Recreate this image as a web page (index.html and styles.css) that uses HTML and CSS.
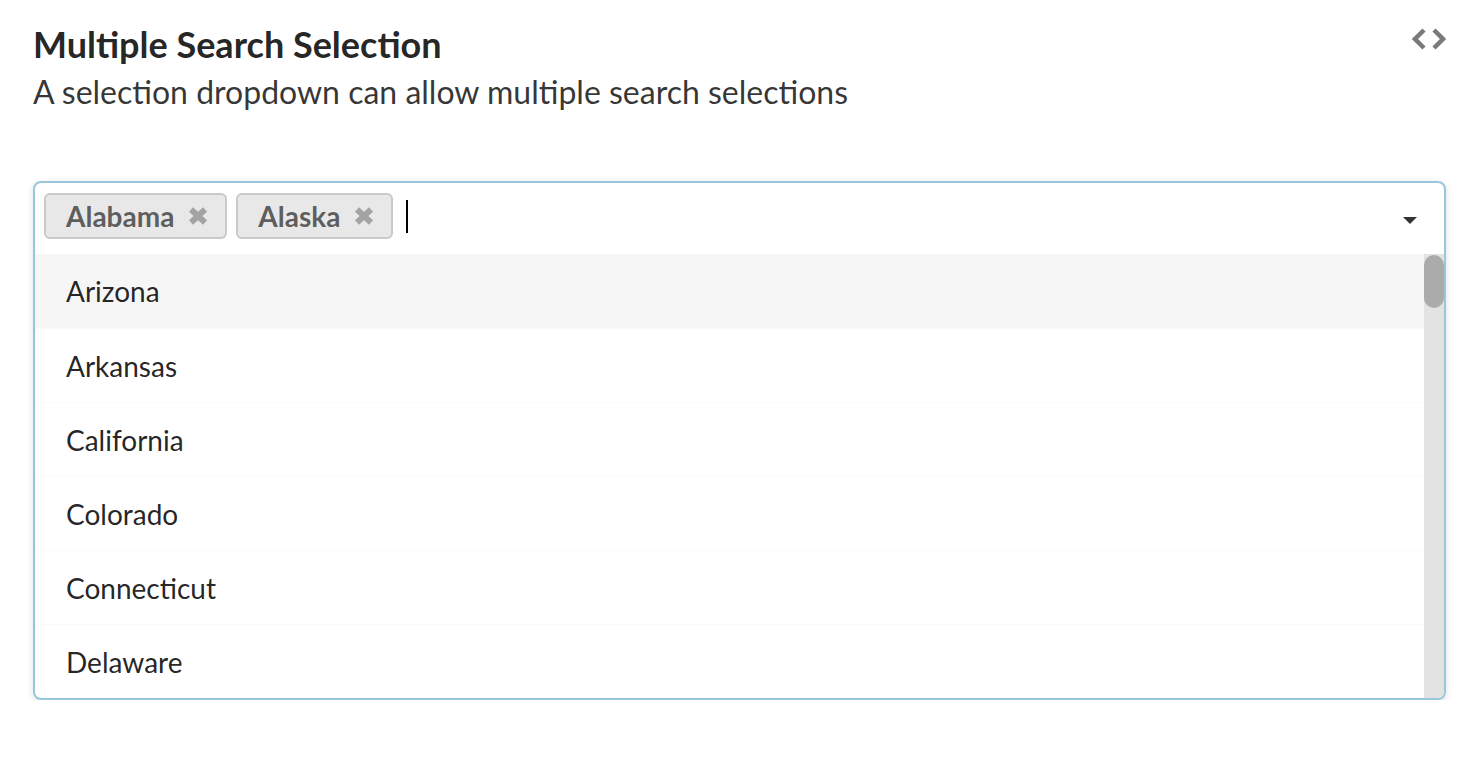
FILE: index.html
```html
<!DOCTYPE html>
<html lang="en">
<head>
  <meta charset="UTF-8" />
  <title>Multiple Search Selection</title>
  <link rel="stylesheet" href="styles.css">
</head>
<body>
  <div class="example">
    <div class="example-head">
      <div class="example-title">
        <h4 class="header">Multiple Search Selection</h4>
        <div class="description">A selection dropdown can allow multiple search selections</div>
      </div>
      <svg class="code-icon" width="34" height="24" viewBox="0 0 34 24">
        <polyline points="12,3 3,12 12,21" />
        <polyline points="22,3 31,12 22,21" />
      </svg>
    </div>

    <div class="dropdown">
      <div class="selection">
        <a class="label">Alabama<svg class="delete" width="20" height="18" viewBox="0 0 20 18"><path d="M3 2.5 L17 15.5 M17 2.5 L3 15.5" /></svg></a>
        <a class="label">Alaska<svg class="delete" width="20" height="18" viewBox="0 0 20 18"><path d="M3 2.5 L17 15.5 M17 2.5 L3 15.5" /></svg></a>
        <span class="search"><span class="caret"></span></span>
        <span class="dropdown-icon"></span>
      </div>
      <div class="menu">
        <div class="items">
          <div class="item selected">Arizona</div>
          <div class="item">Arkansas</div>
          <div class="item">California</div>
          <div class="item">Colorado</div>
          <div class="item">Connecticut</div>
          <div class="item">Delaware</div>
        </div>
        <div class="scrollbar">
          <div class="thumb"></div>
        </div>
      </div>
    </div>
  </div>
</body>
</html>
```

FILE: styles.css
```css
* {
  box-sizing: border-box;
  margin: 0;
  padding: 0;
}

body {
  font-family: Lato, "Helvetica Neue", Arial, sans-serif;
  background: #fff;
  color: rgba(0, 0, 0, 0.87);
  padding: 22px 36px 0 33px;
}

.example-head {
  display: flex;
  justify-content: space-between;
  align-items: flex-start;
}

.header {
  font-size: 36px;
  font-weight: 700;
  line-height: 44px;
  color: rgba(0, 0, 0, 0.87);
}

.description {
  margin-top: 4px;
  font-size: 32px;
  line-height: 44px;
  color: rgba(0, 0, 0, 0.8);
}

.code-icon {
  margin-top: 5px;
  fill: none;
  stroke: #7a7a7a;
  stroke-width: 4.5;
}

.dropdown {
  margin-top: 67px;
  border: 2px solid #96c8da;
  border-radius: 8px;
  box-shadow: 0 2px 6px 0 rgba(34, 36, 38, 0.15);
  overflow: hidden;
}

.selection {
  display: flex;
  align-items: flex-start;
  height: 71px;
  padding: 10px 27px 0 9px;
}

.label {
  display: inline-flex;
  align-items: center;
  height: 46px;
  margin-right: 9px;
  padding: 0 19px 0 22px;
  font-size: 28px;
  font-weight: 700;
  color: rgba(0, 0, 0, 0.62);
  background: #e8e8e8;
  border-radius: 6px;
  box-shadow: inset 0 0 0 2px rgba(34, 36, 38, 0.15);
}

.delete {
  margin-left: 14px;
  fill: none;
  stroke: #a3a3a3;
  stroke-width: 6;
}

.search {
  flex: 1;
  display: flex;
  align-items: center;
  height: 46px;
  padding-left: 4px;
}

.caret {
  width: 2px;
  height: 33px;
  background: #000;
}

.dropdown-icon {
  align-self: center;
  margin-bottom: 6px;
  width: 0;
  height: 0;
  border-left: 7px solid transparent;
  border-right: 7px solid transparent;
  border-top: 7px solid rgba(0, 0, 0, 0.8);
}

.menu {
  display: flex;
}

.items {
  flex: 1;
}

.item {
  height: 74px;
  padding: 22px 31px;
  font-size: 28px;
  line-height: 30px;
  color: rgba(0, 0, 0, 0.87);
  border-top: 1px solid #fafafa;
}

.item.selected {
  background: #f6f6f6;
  border-top: none;
}

.scrollbar {
  width: 20px;
  padding-top: 1px;
  background: #e3e3e3;
}

.thumb {
  height: 53px;
  background: #ababab;
  border-radius: 10px;
}
```
